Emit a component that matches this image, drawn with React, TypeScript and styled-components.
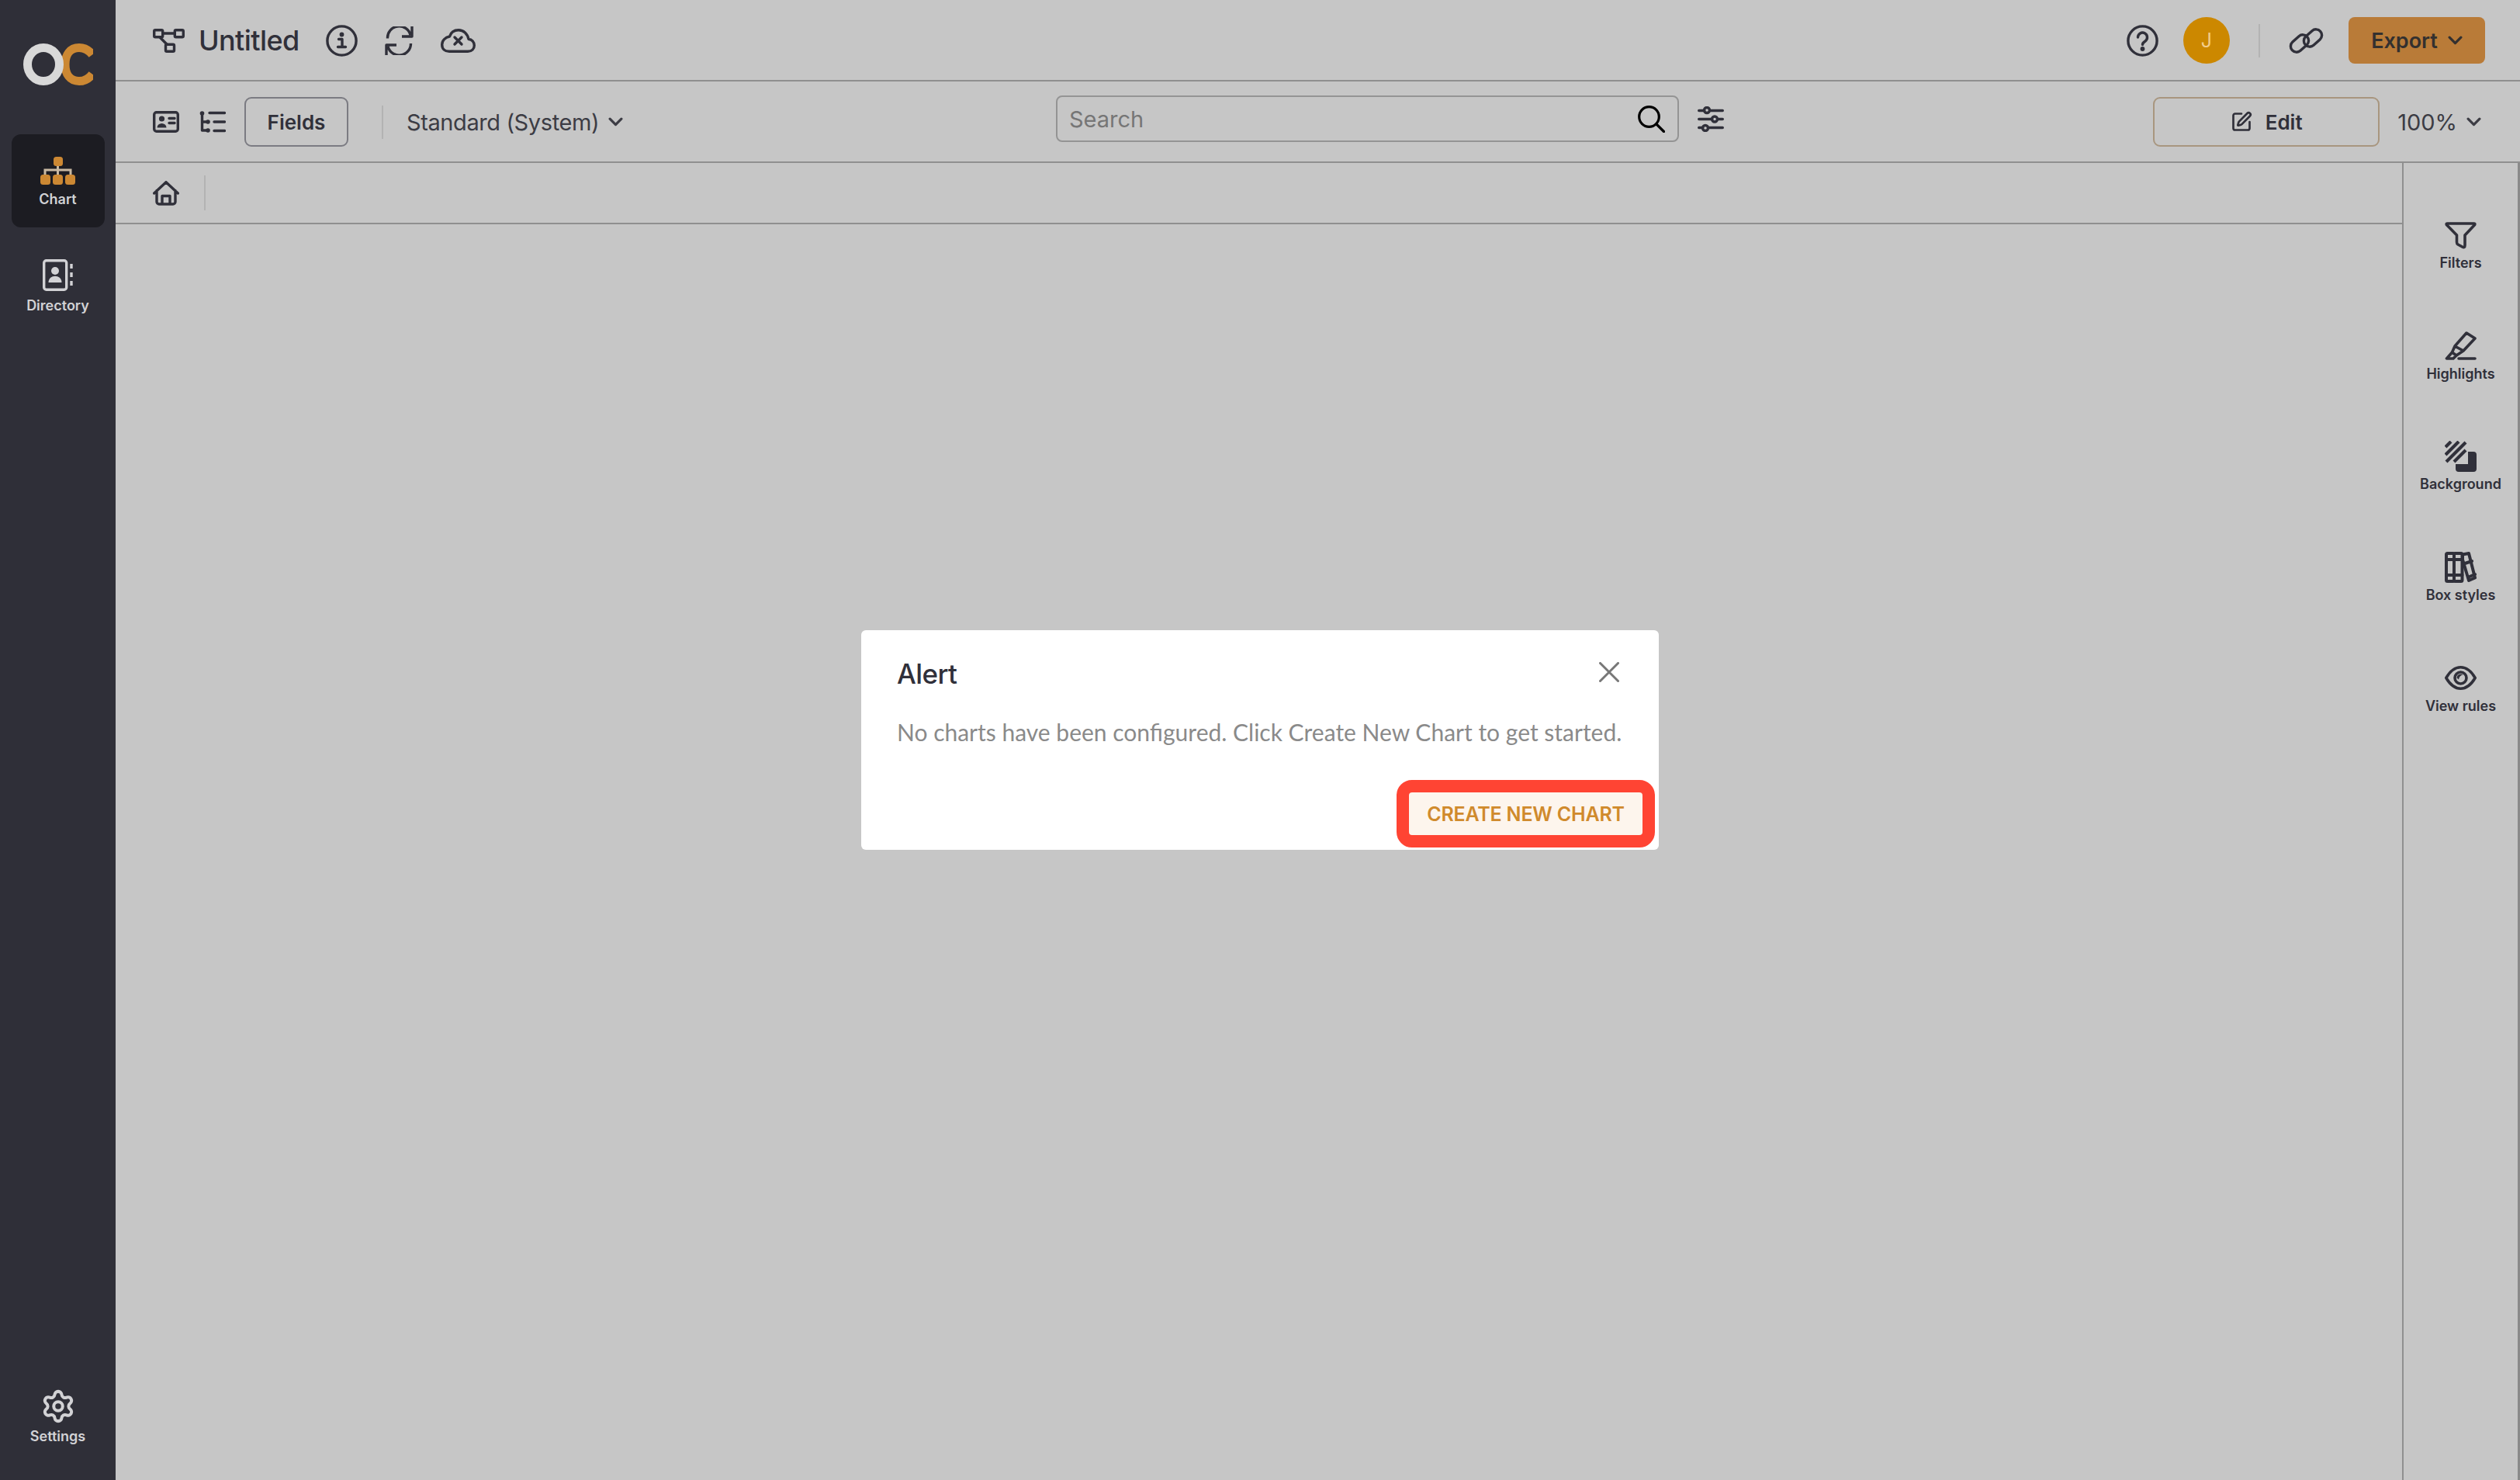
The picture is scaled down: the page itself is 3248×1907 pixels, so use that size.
import * as React from 'react';
import styled, { createGlobalStyle } from 'styled-components';
import { Settings, SquarePen } from 'lucide-react';

const GlobalStyle = createGlobalStyle`
  html, body { margin: 0; padding: 0; height: 100%; background: #c6c6c6; }
  #root { height: 100%; }
  * { box-sizing: border-box; }
  body { font-family: Inter, "Liberation Sans", sans-serif; color: #30303a; }
`;

const INK = '#30303a';
const LINE = '#8f8f8f';

const Shell = styled.div`
  display: flex;
  width: 3248px;
  height: 1907px;
  overflow: hidden;
`;

/* left rail */
const Rail = styled.nav`
  width: 149px;
  flex: none;
  background: #2f2f38;
  color: #d2d2d5;
  display: flex;
  flex-direction: column;
  align-items: center;
  padding: 56px 0 24px;
`;

const Logo = styled.svg`
  width: 90px;
  height: 54px;
  margin-bottom: 63px;
`;

const RailItem = styled.a<{ $active?: boolean; $bottom?: boolean }>`
  width: 120px;
  height: 120px;
  flex: none;
  border-radius: 12px;
  display: flex;
  flex-direction: column;
  align-items: center;
  gap: 8px;
  padding-top: 29px;
  margin-bottom: 12px;
  background: ${p => (p.$active ? '#1c1c22' : 'transparent')};
  ${p => p.$bottom && 'margin-top: auto; margin-bottom: 0;'}
`;

const RailLabel = styled.span`
  font-size: 18px;
  line-height: 22px;
  font-weight: 600;
  color: #d2d2d5;
`;

const Gear = styled(Settings)`
  margin: -3px 0;
`;

const Main = styled.div`
  flex: 1;
  min-width: 0;
  display: flex;
  flex-direction: column;
`;

/* top bar */
const TopBar = styled.header`
  height: 105px;
  flex: none;
  border-bottom: 2px solid ${LINE};
  display: flex;
  align-items: center;
  justify-content: space-between;
  padding: 1px 45px 0 48px;
`;

const Cluster = styled.div<{ $gap: number; $offset?: number }>`
  display: flex;
  align-items: center;
  gap: ${p => p.$gap}px;
  margin-left: ${p => p.$offset ?? 0}px;
`;

const Title = styled.h1`
  margin: 0 -1px 0 -17px;
  font-size: 36px;
  line-height: 42px;
  font-weight: 500;
  letter-spacing: -0.6px;
  color: ${INK};
`;

const Avatar = styled.div`
  width: 60px;
  height: 60px;
  border-radius: 50%;
  background: #cc8800;
  color: #f3cd8c;
  font-size: 25px;
  display: flex;
  align-items: center;
  justify-content: center;
`;

const VRule = styled.span<{ $h: number }>`
  width: 2px;
  height: ${p => p.$h}px;
  background: #b3b3b3;
  flex: none;
`;

const ExportButton = styled.button`
  width: 176px;
  height: 60px;
  border: 0;
  border-radius: 8px;
  background: #b97b38;
  color: #33302f;
  font: 600 27px Inter, sans-serif;
  display: flex;
  align-items: center;
  justify-content: center;
  gap: 13px;
  padding: 0;
`;

/* second bar */
const ToolBar = styled.div`
  height: 105px;
  flex: none;
  border-bottom: 2px solid ${LINE};
  display: grid;
  grid-template-columns: 1212px 861px 1fr;
  align-items: center;
  padding-top: 1px;
`;

const ToolLeft = styled.div`
  display: flex;
  align-items: center;
  padding-left: 48px;
`;

const Gap = styled.span<{ $w: number }>`
  width: ${p => p.$w}px;
  flex: none;
`;

const OutlineButton = styled.button<{ $w: number; $edge: string }>`
  width: ${p => p.$w}px;
  height: 64px;
  background: transparent;
  border: 2px solid ${p => p.$edge};
  border-radius: 9px;
  color: ${INK};
  font: 600 26px Inter, sans-serif;
  display: flex;
  align-items: center;
  justify-content: center;
  gap: 17px;
  padding: 0;
`;

const Picker = styled.div<{ $tight?: boolean }>`
  display: flex;
  align-items: center;
  gap: 12px;
  font-size: 29px;
  color: #3c3c44;
  letter-spacing: ${p => (p.$tight ? '-0.4px' : '0')};
`;

const SearchWrap = styled.div`
  display: flex;
  align-items: center;
  justify-content: space-between;
  margin-bottom: 8px;
`;

const SearchBox = styled.div`
  width: 803px;
  height: 60px;
  border: 2px solid #949494;
  border-radius: 8px;
  display: flex;
  align-items: center;
  justify-content: space-between;
  padding: 0 16px 0 15px;
`;

const SearchInput = styled.input`
  flex: 1;
  background: transparent;
  border: 0;
  outline: 0;
  padding: 0;
  font: 400 29px Inter, sans-serif;
  &::placeholder { color: #767676; opacity: 1; }
`;

const ToolRight = styled.div`
  display: flex;
  align-items: center;
  justify-content: flex-end;
  gap: 23px;
  padding-right: 50px;
`;

/* body */
const Body = styled.div`
  flex: 1;
  display: flex;
  min-height: 0;
`;

const Canvas = styled.main`
  flex: 1;
  min-width: 0;
`;

const Crumbs = styled.div`
  height: 79px;
  border-bottom: 2px solid ${LINE};
  display: flex;
  align-items: center;
  gap: 32px;
  padding-left: 48px;
`;

const SidePanel = styled.aside`
  width: 152px;
  flex: none;
  border-left: 2px solid ${LINE};
  border-right: 3px solid #8a8a8a;
  padding-top: 72px;
  display: grid;
  grid-auto-rows: 142.7px;
  justify-items: center;
`;

const PanelItem = styled.a`
  display: flex;
  flex-direction: column;
  align-items: center;
  gap: 3px;
`;

const PanelIcon = styled.span`
  height: 42px;
  display: flex;
  align-items: center;
`;

const PanelLabel = styled.span`
  font-size: 18px;
  line-height: 24px;
  font-weight: 600;
  color: ${INK};
  white-space: nowrap;
`;

/* dialog */
const Backdrop = styled.div`
  position: fixed;
  inset: 0;
  display: flex;
  align-items: center;
  justify-content: center;
`;

const Dialog = styled.section`
  width: 1028px;
  height: 283px;
  background: #fff;
  border-radius: 6px;
  padding: 34px 21px 19px 46px;
  display: flex;
  flex-direction: column;
`;

const DialogHead = styled.div`
  display: flex;
  justify-content: space-between;
  align-items: flex-start;
  padding-right: 30px;
`;

const DialogTitle = styled.h2`
  margin: 0;
  font-size: 35px;
  line-height: 44px;
  font-weight: 500;
  letter-spacing: -0.6px;
  color: ${INK};
`;

const CloseSlot = styled.span`
  margin-top: 7px;
`;

const DialogText = styled.p`
  margin: 32px 0 0;
  font-family: Lato, sans-serif;
  font-size: 30px;
  line-height: 42px;
  color: #8a8a8a;
  white-space: nowrap;
`;

const CreateButton = styled.button`
  position: relative;
  align-self: flex-end;
  margin-top: auto;
  width: 301px;
  height: 55px;
  border: 0;
  padding: 0;
  background: #fdf5ed;
  color: #d08a2c;
  font: 600 25px Inter, sans-serif;
  letter-spacing: -0.2px;
  &::after {
    content: '';
    position: absolute;
    inset: -16px;
    border: 16px solid #ff4433;
    border-radius: 20px;
  }
`;

const Chevron = ({ w = 19 }: { w?: number }) => (
  <svg width={w} height={w * 0.62} viewBox="0 0 18 11" fill="none" stroke="currentColor" strokeWidth="3" strokeLinecap="round" strokeLinejoin="round">
    <path d="M2 2l7 7 7-7" />
  </svg>
);

const stroke = { fill: 'none', stroke: 'currentColor', strokeWidth: 3.4, strokeLinecap: 'round', strokeLinejoin: 'round' } as const;

const FlowIcon = () => (
  <svg width="41" height="31" viewBox="0 0 41 31" {...stroke}>
    <rect x="1.7" y="1.7" width="11" height="9" rx="1.5" />
    <rect x="28.3" y="1.7" width="11" height="9" rx="1.5" />
    <rect x="16.5" y="20.3" width="11" height="9" rx="1.5" />
    <path d="M13 6h15M9 11l9 9" />
  </svg>
);

const InfoIcon = () => (
  <svg width="41" height="41" viewBox="0 0 41 41" {...stroke}>
    <circle cx="20.5" cy="20.5" r="18.6" />
    <path d="M16.5 18.5h4.5v9.5M15.5 28.5h10" />
    <circle cx="20.5" cy="12.5" r="1.2" fill="currentColor" />
  </svg>
);

const RefreshIcon = () => (
  <svg width="37" height="37" viewBox="0 0 37 37" {...stroke} strokeLinecap="butt">
    <path d="M3.5 15.5A15 15 0 0 1 33 11M35 0v13H22M33.5 22A15 15 0 0 1 4 26M2 37V24h13" />
  </svg>
);

const CloudXIcon = () => (
  <svg width="45" height="31" viewBox="0 0 45 31" {...stroke}>
    <path d="M11 29.3H35C40 29.3 43.3 26 43.3 21.5C43.3 17 40 13.5 36 13.5C34.5 6.5 29.5 1.7 23 1.7C17 1.7 13 5 11.5 10C6 11 1.7 15 1.7 20.5C1.7 26 5.5 29.3 11 29.3Z" />
    <path d="M18 11l9 9M27 11l-9 9" />
  </svg>
);

const HelpIcon = () => (
  <svg width="41" height="41" viewBox="0 0 41 41" {...stroke}>
    <circle cx="20.5" cy="20.5" r="18.6" />
    <path d="M14.5 16a6 6 0 1 1 9.5 5c-2 1.3-3.5 2.5-3.5 4.5" />
    <circle cx="20.5" cy="31" r="1.2" fill="currentColor" />
  </svg>
);

const LinkIcon = () => (
  <svg width="45" height="33" viewBox="0 0 45 33" {...stroke}>
    <rect x="1" y="12.5" width="26" height="15" rx="7.5" transform="rotate(-42 14 20)" />
    <rect x="18" y="5.5" width="26" height="15" rx="7.5" transform="rotate(-42 31 13)" />
  </svg>
);

const CardIcon = () => (
  <svg width="34" height="28" viewBox="0 0 34 28" {...stroke}>
    <rect x="1.7" y="1.7" width="30.6" height="24.6" rx="3" />
    <circle cx="11.5" cy="10" r="3.6" fill="currentColor" stroke="none" />
    <path d="M5.5 21.5a6 5.5 0 0 1 12 0z" fill="currentColor" stroke="none" />
    <path d="M21 9.5h7M21 15.5h7" />
  </svg>
);

const TreeListIcon = () => (
  <svg width="34" height="28" viewBox="0 0 34 28" {...stroke}>
    <circle cx="3.5" cy="3" r="2.8" fill="currentColor" stroke="none" />
    <circle cx="11" cy="14" r="2.8" fill="currentColor" stroke="none" />
    <circle cx="11" cy="25" r="2.8" fill="currentColor" stroke="none" />
    <path d="M3.5 3v22h7M3.5 14h7M13 2.5h19.5M19 14h13.5M19 25.5h13.5" />
  </svg>
);

const SearchIcon = () => (
  <svg width="35" height="35" viewBox="0 0 35 35" fill="none" stroke="#000" strokeWidth="3.2" strokeLinecap="round">
    <circle cx="14.5" cy="14.5" r="12.8" />
    <path d="M24 24l9.5 9.5" />
  </svg>
);

const SlidersIcon = () => (
  <svg width="34" height="33" viewBox="0 0 34 33" {...stroke}>
    <path d="M1.7 5.5h7M16 5.5h16.3M1.7 16.5h17M26 16.5h6.3M1.7 27.5h5M14 27.5h18.3" />
    <circle cx="12" cy="5" r="3.5" />
    <circle cx="22" cy="16.5" r="3.5" />
    <circle cx="10" cy="28" r="3.5" />
  </svg>
);

const HomeIcon = () => (
  <svg width="34" height="32" viewBox="0 0 34 32" {...stroke}>
    <path d="M1.7 16L17 1.7 32.3 16M5 12.5V27a3 3 0 0 0 3 3h18a3 3 0 0 0 3-3V12.5M12 30V19.5h10V30" />
  </svg>
);

const FilterIcon = () => (
  <svg width="41" height="35" viewBox="0 0 41 35" {...stroke} strokeWidth={3.6}>
    <path d="M3.5 2H37.5Q39.5 2 38.5 3.8L26 17V30Q26 34 22.5 32L17 29Q15.5 28 15.5 26V17L2.5 3.8Q1.5 2 3.5 2Z" />
  </svg>
);

const MarkerIcon = () => (
  <svg width="41" height="37" viewBox="0 0 41 37" {...stroke} strokeWidth={3.6}>
    <path d="M28 2L39 9 24 25 13 19ZM13 19L9.5 27 15 31 24 25M9.5 27L2.5 35H11L15 31M18 35H39" />
  </svg>
);

const SwatchIcon = () => (
  <svg width="41" height="40" viewBox="0 0 41 40" fill="none">
    <path d="M1 8L8 1M1 18L18 1M2 27L27 2M12 27L27 12" stroke="currentColor" strokeWidth="4.2" />
    <path d="M30 14H37a4 4 0 0 1 4 4V36a4 4 0 0 1-4 4H18a4 4 0 0 1-4-4V30H30Z" fill="currentColor" />
  </svg>
);

const BooksIcon = () => (
  <svg width="41" height="40" viewBox="0 0 41 40" {...stroke} strokeWidth={4}>
    <rect x="2" y="2" width="10" height="36" rx="1.5" />
    <rect x="12" y="2" width="10.5" height="36" rx="1.5" />
    <path d="M2 10h20.5M2 30h20.5" />
    <path d="M23 3.5L31 2 39 33.5 31 37 23 10ZM26 15l9-3M32 32l7-3" />
  </svg>
);

const EyeIcon = () => (
  <svg width="41" height="31" viewBox="0 0 41 31" {...stroke} strokeWidth={3.6}>
    <path d="M1.8 15.5C8 5 14 1.8 20.5 1.8S33 5 39.2 15.5C33 26 27 29.2 20.5 29.2S8 26 1.8 15.5Z" />
    <circle cx="20.5" cy="15.5" r="7.5" />
    <path d="M15.5 15.5a5 5 0 0 1 8-4c-2.5.2-5 2.2-5.5 6z" fill="currentColor" stroke="none" />
  </svg>
);

const CloseIcon = () => (
  <svg width="26" height="26" viewBox="0 0 26 26" fill="none" stroke="#777" strokeWidth="3" strokeLinecap="round">
    <path d="M1.5 1.5l23 23M24.5 1.5l-23 23" />
  </svg>
);

const panelItems = [
  { label: 'Filters', icon: <FilterIcon /> },
  { label: 'Highlights', icon: <MarkerIcon /> },
  { label: 'Background', icon: <SwatchIcon /> },
  { label: 'Box styles', icon: <BooksIcon /> },
  { label: 'View rules', icon: <EyeIcon /> },
];

const App: React.FunctionComponent = () => {
  return (
    <Shell>
      <GlobalStyle />
      <Rail>
        <Logo viewBox="0 0 90 54" fill="none" strokeWidth="11">
          <path d="M89 14.5C84 8 78 5.5 72 5.5C60 5.5 54 15 54 27C54 39 60 48.5 72 48.5C78 48.5 84 46 89 39.5" stroke="#cc8833" />
          <ellipse cx="26" cy="27" rx="20.5" ry="21.5" stroke="#d8d8d8" />
        </Logo>
        <RailItem $active>
          <svg width="45" height="36" viewBox="0 0 45 36">
            <path d="M22.5 10V24M6 24V17H39V24" fill="none" stroke="#c9b9a3" strokeWidth="3" />
            <g fill="#cc8833">
              <rect x="17" width="12" height="12" rx="3.5" />
              <rect y="23" width="13" height="13" rx="3.5" />
              <rect x="16" y="23" width="13" height="13" rx="3.5" />
              <rect x="32" y="23" width="13" height="13" rx="3.5" />
            </g>
          </svg>
          <RailLabel>Chart</RailLabel>
        </RailItem>
        <RailItem>
          <svg width="39" height="41" viewBox="0 0 39 41" {...stroke}>
            <rect x="1.7" y="1.7" width="29" height="37.6" rx="3" />
            <circle cx="16" cy="15" r="5" fill="currentColor" stroke="none" />
            <path d="M7.5 30c0-11 17-11 17 0z" fill="currentColor" stroke="none" />
            <path d="M37 6v6M37 17v6M37 28v6" strokeLinecap="butt" />
          </svg>
          <RailLabel>Directory</RailLabel>
        </RailItem>
        <RailItem $bottom>
          <Gear size={46} strokeWidth={2.1} />
          <RailLabel>Settings</RailLabel>
        </RailItem>
      </Rail>

      <Main>
        <TopBar>
          <Cluster $gap={35}>
            <FlowIcon />
            <Title>Untitled</Title>
            <InfoIcon />
            <RefreshIcon />
            <CloudXIcon />
          </Cluster>
          <Cluster $gap={32}>
            <HelpIcon />
            <Avatar>J</Avatar>
            <Cluster $gap={37} $offset={5}>
              <VRule $h={43} />
              <LinkIcon />
            </Cluster>
            <ExportButton>
              Export <Chevron />
            </ExportButton>
          </Cluster>
        </TopBar>

        <ToolBar>
          <ToolLeft>
            <CardIcon />
            <Gap $w={26} />
            <TreeListIcon />
            <Gap $w={24} />
            <OutlineButton $w={134} $edge="#7b7b82">Fields</OutlineButton>
            <Gap $w={43} />
            <VRule $h={43} />
            <Gap $w={30} />
            <Picker $tight>
              Standard (System) <Chevron />
            </Picker>
          </ToolLeft>
          <SearchWrap>
            <SearchBox>
              <SearchInput placeholder="Search" readOnly />
              <SearchIcon />
            </SearchBox>
            <SlidersIcon />
          </SearchWrap>
          <ToolRight>
            <OutlineButton $w={292} $edge="#a8967f">
              <SquarePen size={28} strokeWidth={2.3} />
              Edit
            </OutlineButton>
            <Picker>
              100% <Chevron />
            </Picker>
          </ToolRight>
        </ToolBar>

        <Body>
          <Canvas>
            <Crumbs>
              <HomeIcon />
              <VRule $h={45} />
            </Crumbs>
          </Canvas>
          <SidePanel>
            {panelItems.map(item => (
              <PanelItem key={item.label}>
                <PanelIcon>{item.icon}</PanelIcon>
                <PanelLabel>{item.label}</PanelLabel>
              </PanelItem>
            ))}
          </SidePanel>
        </Body>
      </Main>

      <Backdrop>
        <Dialog>
          <DialogHead>
            <DialogTitle>Alert</DialogTitle>
            <CloseSlot><CloseIcon /></CloseSlot>
          </DialogHead>
          <DialogText>No charts have been configured. Click Create New Chart to get started.</DialogText>
          <CreateButton>CREATE NEW CHART</CreateButton>
        </Dialog>
      </Backdrop>
    </Shell>
  );
};

export default App;
